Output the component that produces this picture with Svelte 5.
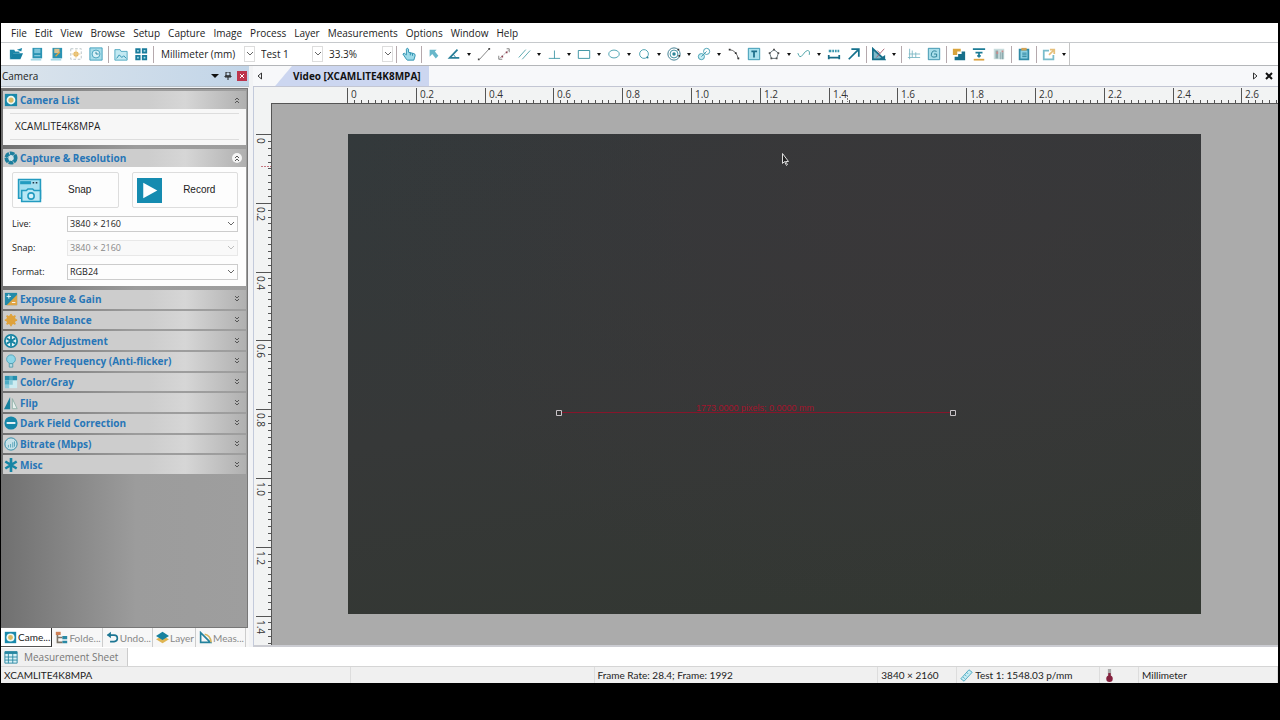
<script>
  const menus = ['File', 'Edit', 'View', 'Browse', 'Setup', 'Capture', 'Image', 'Process', 'Layer', 'Measurements', 'Options', 'Window', 'Help'];

  // 16x16 artwork
  const icons = {
    open: '<path d="M1 14V3h5l1 2h5v2H5z" fill="#1c86a8"/><path d="M4 7h12l-3 7H1z" fill="#1780a2"/><path d="M9 3l6-2-1 4" fill="#1c86a8"/>',
    save: '<path d="M4 1h11v12H4z" fill="#2a93b3"/><path d="M6 2h7v5H6z" fill="#7cc4da"/><path d="M6 10h7" stroke="#b7e2ee"/><path d="M2 14.500h12" stroke="#a8d8e6" stroke-width="2"/>',
    saveas: '<path d="M4 1h11v12H4z" fill="#2a93b3"/><path d="M6 2h6v5H6z" fill="#d9c190"/><path d="M7 10l5-5 1 1-5 5z" fill="#e0a13c"/><path d="M2 14.500h12" stroke="#a8d8e6" stroke-width="2"/>',
    burst: '<path d="M2 2h12v12H2z" fill="none" stroke="#b3bfc2" stroke-dasharray="3 2"/><circle cx="8" cy="8" r="3" fill="#e8b75b"/><path d="M8 3v10M3 8h10" stroke="#e8cf95"/>',
    timer: '<path d="M1 1h14v14H1z" fill="#a8ddea" stroke="#3b9cb9"/><circle cx="8" cy="8" r="4.500" fill="#d8f1f7" stroke="#3b9cb9"/><path d="M8 5.500V8h3" fill="none" stroke="#1c7c9b"/>',
    album: '<path d="M1 3h6l1 2h7v10H1z" fill="#c2e9f2" stroke="#47a3bd"/><path d="M3 13l3-4 3 3 2-2 3 3" fill="none" stroke="#1c86a8"/>',
    grid: '<path d="M2.500 2.500h4v4h-4zM10 2.500h4v4h-4zM2.500 10h4v4h-4zM10 10h4v4h-4z" fill="#9fd8e8" stroke="#1a7c9c" stroke-width="2"/>',
    hand: '<path d="M5 14L1 8l1.500-1L5 9V2.500Q6 0 7.500 2.500V6l6 1.500q2 .5 1.500 2.500L13.500 15H6z" fill="#9ddbea" stroke="#2189aa"/><path d="M9.500 6.500v3M12 7.500V10" stroke="#2189aa"/>',
    pointer: '<path d="M3 3h8L9 5l4 5-3 3-4-5-3 3z" fill="#68b7ca"/>',
    angle: '<path d="M12 3L3 12.500h11" fill="none" stroke="#287f99" stroke-width="2"/><path d="M7 8l3 4" stroke="#287f99"/>',
    line: '<path d="M3 14L14 2" stroke="#777"/><path d="M1 13h2v2H1zM13 1h2v2h-2z" fill="#444"/>',
    points: '<path d="M3 13L14 3" stroke="#999" stroke-dasharray="2 1"/><path d="M2 10v4h4M11 2h3v4" fill="none" stroke="#777"/><path d="M5 10h2v2H5zM10 5h2v2h-2z" fill="#8e4050"/>',
    parallel: '<path d="M2 12l8-9M6 14l9-10" stroke="#4aa0a8"/>',
    perp: '<path d="M2 13h13M8.500 13V4" stroke="#3a94a3"/>',
    rect: '<path d="M1.500 4h13v9h-13z" fill="none" stroke="#2c8a9c"/>',
    ellipse: '<ellipse cx="8" cy="8" rx="6" ry="4.500" fill="none" stroke="#3d9aaa"/>',
    circle: '<circle cx="8" cy="8" r="5" fill="none" stroke="#3d9aaa"/><path d="M11 11h2v2h-2z" fill="#277f94"/>',
    rings: '<circle cx="8" cy="8" r="7" fill="none" stroke="#2d7186"/><circle cx="8" cy="8" r="4.500" fill="none" stroke="#2d8698"/><circle cx="8" cy="8" r="2" fill="#2d8698"/><path d="M12 2h2v2h-2zM13 9h2v2h-2z" fill="#333"/>',
    twocircle: '<circle cx="5" cy="11" r="3.500" fill="#c9edf4" stroke="#3797ac"/><circle cx="11" cy="5" r="3.500" fill="none" stroke="#3797ac"/><path d="M5 11l6-6" stroke="#3797ac"/>',
    arc: '<path d="M3 3q8 1 10 11" fill="none" stroke="#555"/><path d="M2 2h2v2H2zM12 12h2v2h-2zM9 6h2v2H9z" fill="#333"/>',
    text: '<path d="M1.500 1.500h13v13h-13z" fill="#a9e2ee" stroke="#2c90ab"/><path d="M5 5h6.500M8 5v7" fill="none" stroke="#1d6f8a" stroke-width="2"/>',
    polygon: '<path d="M8 3l5 4-2 6H5L3 7z" fill="none" stroke="#52656b"/><path d="M7 2h2v2H7zM12 6h2v2h-2zM10 12h2v2h-2zM4 12h2v2H4zM2 6h2v2H2z" fill="#4b4b4b"/>',
    curve: '<path d="M1 7q2 7 5.500 2t5.500-5q3 0 2 5" fill="none" stroke="#3c9a9f"/>',
    scale: '<path d="M2 4.500h3M6 4.500h2M9 4.500h2M12 4.500h2" stroke="#3b97ae" stroke-width="3"/><path d="M1 12h14M2 9v5M14 9v5" stroke="#176b86" stroke-width="2"/>',
    arrow: '<path d="M2 14L13 3M5 2.500h8.500V11" fill="none" stroke="#15718d" stroke-width="2"/>',
    calibrate: '<path d="M1 2v12h13z" fill="#7fb9c9" stroke="#176f8a" stroke-width="2"/><path d="M5 12l9-10M6 4l3 3" stroke="#a5596b"/><path d="M8 14h7V9z" fill="#176f8a"/>',
    caliper: '<path d="M2 8h13M1 12h14M3 2v12M6 4v8M10 6v6" stroke="#79b6c4"/>',
    gbox: '<path d="M1.500 1.500h13v13h-13z" fill="#a8deea" stroke="#318da8"/><path d="M11 5q-5-2-6 3t6 3V8H8" fill="none" stroke="#247991"/>',
    stair: '<path d="M1 2h9v3H6v4H1z" fill="#d9a43c"/><path d="M11 5h4v10H3v-4h4V8h4z" fill="#176f8a"/>',
    merge: '<path d="M1 2.500h14M4 6.500h8" stroke="#1c7c96" stroke-width="2"/><path d="M8 6v6M6 10h4" fill="none" stroke="#1c7c96" stroke-width="2"/><path d="M2 14.500h12" stroke="#dba341" stroke-width="2"/>',
    compare: '<path d="M2 2h12v12H2z" fill="#c8dcdd"/><path d="M4 4h3v9H4zM9 6h1v8H9zM11 6h2v8h-2z" fill="#8ba9ac"/><path d="M5 5h2v3H5zM11 4h2v2h-2z" fill="#c98a8a"/>',
    clip: '<path d="M3 3h10v11H3z" fill="#8dd2e4" stroke="#318aa6" stroke-width="2"/><path d="M5 1h6v3H5z" fill="#d1a356"/><path d="M6 7h5M6 9h5M6 11h5" stroke="#267b95"/>',
    export: '<path d="M8 4H2v10h11V9" fill="none" stroke="#79bccb" stroke-width="2"/><path d="M8 9l5-5M9 3h5v5" fill="none" stroke="#e6c07c" stroke-width="2"/>',
    camera: '<path d="M1 1h14v14H1z" fill="#1989ab"/><circle cx="8" cy="8" r="5" fill="#edf9f5"/><circle cx="8" cy="8" r="3" fill="#d9b964"/>',
    shutter: '<circle cx="8" cy="8" r="5.500" fill="#c6dde4" stroke="#1c7e9d" stroke-width="4" stroke-dasharray="5 1"/><path d="M8 2l-3 6M14 7H8M11 13L8 8M5 13l1-6M2 7l6 4M12 4l-1 7" stroke="#1c7e9d"/><circle cx="8" cy="8" r="3" fill="#d2e3e8"/>',
    exposure: '<path d="M1 1h14v14H1z" fill="#238aa9"/><path d="M15 3v12H3z" fill="#dfa545"/><path d="M3 5h5M5.500 2.500v5M9 12h4" stroke="#fff"/>',
    sun: '<circle cx="8" cy="8" r="5.500" fill="#dfa23c"/><path d="M8 1v14M1 8h14M3 3l10 10M13 3L3 13" stroke="#dfa23c" stroke-width="2"/>',
    palette: '<circle cx="8" cy="8" r="7" fill="#e4f3f6" stroke="#1683a2" stroke-width="2"/><path d="M8 2v12M3 5l10 6M3 11l10-6" stroke="#1683a2" stroke-width="2"/>',
    bulb: '<circle cx="8" cy="6" r="5" fill="#8dd5e7" stroke="#4ba3bc"/><path d="M6 11h4v4H6z" fill="#b8dce4" stroke="#4e98aa"/>',
    shades: '<path d="M1 1h14v14H1z" fill="#cdecf1"/><path d="M1 1h14v5H1z" fill="#258ead"/><path d="M1 6h5v5H1zM6 1h4v5H6z" fill="#4eacc4"/><path d="M6 6h4v5H6zM1 11h5v4H1z" fill="#8ccbd9"/>',
    flip: '<path d="M7 1v14H0z" fill="#16809e"/><path d="M9.500 3v11.500H15z" fill="#e8f1ef" stroke="#8dafa6"/>',
    dark: '<circle cx="8" cy="8" r="7.500" fill="#1586a8"/><path d="M3 8h10" stroke="#fff" stroke-width="2"/>',
    bitrate: '<circle cx="8" cy="8" r="7" fill="#c7e2e9" stroke="#2386a3"/><path d="M5 12v-3M7.500 12V8M10 12V6M12 11V5" stroke="#4f9db3"/>',
    misc: '<path d="M8 0v16M1.500 4l13 8M14.500 4l-13 8" stroke="#1685a5" stroke-width="3"/>',
    tree: '<path d="M9 6h6v4H9zM9 12h6v3H9z" fill="#2889a5"/><path d="M3 4v10h6M3 8h6" fill="none" stroke="#7d7568" stroke-width="2"/><path d="M1 1h6v4H1z" fill="#ce7f55"/>',
    undo: '<path d="M2 5h8q4 0 4 4t-4 4H5" fill="none" stroke="#1d7693" stroke-width="2"/><path d="M6 1L1 5l5 4" fill="#1d7693"/>',
    layers: '<path d="M8 6l8 4-8 5-8-5z" fill="#dfb553"/><path d="M8 1l8 5-8 5-8-5z" fill="#17829f"/>',
    ruler: '<path d="M2 2v12h12z" fill="none" stroke="#24829d" stroke-width="2"/><path d="M7 4q7 1 8 10" fill="none" stroke="#d6b45e" stroke-width="2"/>',
    sheet: '<path d="M1 2h14v13H1z" fill="#d8f1f6" stroke="#2686a1"/><path d="M1 3h14" stroke="#2686a1" stroke-width="3"/><path d="M5 3v12M10 3v12M1 8h14M1 11.500h14" stroke="#2686a1"/>',
    tape: '<path d="M11 1l4 3-10 11-4-3z" fill="#c9edf4" stroke="#3ba0bb"/><path d="M8 4l2 2M6 7l2 2M4 10l2 2" stroke="#3ba0bb"/>',
    thermo: '<path d="M8 0v10" stroke="#aaa" stroke-width="4"/><path d="M8 5v6" stroke="#84213e" stroke-width="3"/><circle cx="8" cy="12" r="4" fill="#84213e"/>',
    snap: '<path d="M1 1h14v12H1z" fill="#a6dff0" stroke="#239bc0"/><path d="M2 3h7" stroke="#239bc0" stroke-width="2"/><path d="M10 3h1M12 3h1" stroke="#234"/><path d="M3 8h3l1-1h3l1 1h4v7H3z" fill="#b9e8f5" stroke="#239bc0"/><circle cx="9" cy="11.500" r="2" fill="#d8f3fb" stroke="#239bc0"/>',
    record: '<path d="M0 0h16v16H0z" fill="#158bb0"/><path d="M4 3l9 5-9 5z" fill="#fff"/>'
  };

  const fileTools = ['open', 'save', 'saveas', 'burst', 'timer', '|', 'album', 'grid', '|'];
  // a trailing "+" means the tool has a drop-down arrow
  const drawTools = [
    '|', 'hand', '|', 'pointer', 'angle+', 'line', 'points', 'parallel+', 'perp+', 'rect+', 'ellipse+', 'circle+',
    'rings+', 'twocircle+', 'arc', 'text', 'polygon+', 'curve+', 'scale', 'arrow', '|', 'calibrate+', '|',
    'caliper', 'gbox', '|', 'stair', 'merge', 'compare', '|', 'clip', '|', 'export+'
  ];

  const sections = [
    { icon: 'exposure', label: 'Exposure & Gain' },
    { icon: 'sun', label: 'White Balance' },
    { icon: 'palette', label: 'Color Adjustment' },
    { icon: 'bulb', label: 'Power Frequency (Anti-flicker)' },
    { icon: 'shades', label: 'Color/Gray' },
    { icon: 'flip', label: 'Flip' },
    { icon: 'dark', label: 'Dark Field Correction' },
    { icon: 'bitrate', label: 'Bitrate (Mbps)' },
    { icon: 'misc', label: 'Misc' }
  ];

  const fields = [
    { id: 'live', label: 'Live:', value: '3840 × 2160' },
    { id: 'snap', label: 'Snap:', value: '3840 × 2160', disabled: true },
    { id: 'format', label: 'Format:', value: 'RGB24' }
  ];

  const dockTabs = [
    { icon: 'camera', label: 'Came...' },
    { icon: 'tree', label: 'Folde...' },
    { icon: 'undo', label: 'Undo...' },
    { icon: 'layers', label: 'Layer' },
    { icon: 'ruler', label: 'Meas...' }
  ];

  let activeTab = $state(0);

  const STEP = 6.88;

  function makeTicks(count, start) {
    return Array.from({ length: count }, (_, i) => ({
      pos: Math.round(start + i * STEP),
      label: i % 10 === 0 ? (i === 0 ? '0' : (i / 50).toFixed(1)) : null
    }));
  }

  const xTicks = makeTicks(136, 76);
  const yTicks = makeTicks(75, 31);
</script>

{#snippet icon(name)}
  <svg class="icon" viewBox="0 0 16 16" aria-hidden="true">{@html icons[name]}</svg>
{/snippet}

{#snippet combo(id, value, disabled = false, label = null)}
  <span class="combo" class:disabled>
    <select {id} {disabled} aria-label={label}>
      <option>{value}</option>
    </select>
    <span class="combo-btn">
      <svg viewBox="0 0 8 8" aria-hidden="true"><path d="M1 2l3 3 3-3" /></svg>
    </span>
  </span>
{/snippet}

{#snippet tools(list)}
  {#each list as t}
    {#if t === '|'}
      <span class="sep"></span>
    {:else}
      <button class="tool" aria-label={t.replace('+', '')}>{@render icon(t.replace('+', ''))}</button>
      {#if t.endsWith('+')}
        <button class="drop" aria-label="More"></button>
      {/if}
    {/if}
  {/each}
{/snippet}

{#snippet chevrons(up = false)}
  <svg class="chevrons" class:up viewBox="0 0 10 10" aria-hidden="true"><path d="M3 2l2 2 2-2M3 5l2 2 2-2" /></svg>
{/snippet}

<div class="screen">
  <div class="app">
    <nav class="menubar">
      {#each menus as m}
        <button>{m}</button>
      {/each}
    </nav>

    <div class="toolbar">
      {@render tools(fileTools)}
      <div class="pick unit">{@render combo('unit', 'Millimeter (mm)', false, 'Unit')}</div>
      <div class="pick lens">{@render combo('lens', 'Test 1', false, 'Calibration')}</div>
      <div class="pick zoom">{@render combo('zoom', '33.3%', false, 'Zoom')}</div>
      {@render tools(drawTools)}
      <span class="toolbar-end"></span>
    </div>

    <div class="workspace">
      <aside class="dock">
        <header class="dock-title">
          <span>Camera</span>
          <button aria-label="Menu"><svg viewBox="0 0 8 8"><path d="M0 2h8L4 6z" fill="#111" /></svg></button>
          <button aria-label="Pin"><svg viewBox="0 0 8 8"><path d="M2 0h4v4H2zM1 4h6v1H1zM4 5v3" fill="none" stroke="#222" /></svg></button>
          <button class="close" aria-label="Close"><svg viewBox="0 0 8 8"><path d="M2 2l4 4M6 2L2 6" stroke="#fff" /></svg></button>
        </header>

        <div class="panels">
          <section>
            <button class="bar">{@render icon('camera')}<span>Camera List</span>{@render chevrons(true)}</button>
            <div class="body list"><p>XCAMLITE4K8MPA</p></div>
          </section>

          <section>
            <button class="bar hot">{@render icon('shutter')}<span>Capture &amp; Resolution</span>{@render chevrons(true)}</button>
            <div class="body capture">
              <div class="actions">
                <button>{@render icon('snap')}<span>Snap</span></button>
                <button>{@render icon('record')}<span>Record</span></button>
              </div>
              {#each fields as f}
                <div class="field">
                  <label for={f.id}>{f.label}</label>
                  {@render combo(f.id, f.value, f.disabled)}
                </div>
              {/each}
            </div>
          </section>

          <div class="collapsed">
            {#each sections as s}
              <button class="bar">{@render icon(s.icon)}<span>{s.label}</span>{@render chevrons()}</button>
            {/each}
          </div>
        </div>

        <div class="dock-tabs">
          {#each dockTabs as t, i}
            <button class:active={activeTab === i} onclick={() => (activeTab = i)}>
              {@render icon(t.icon)}<span>{t.label}</span>
            </button>
          {/each}
        </div>
      </aside>

      <main class="view">
        <div class="view-tabs">
          <button class="arrow" aria-label="Previous"><svg viewBox="0 0 8 8"><path d="M5.500 1v6L2 4z" fill="none" stroke="#333" /></svg></button>
          <button class="tab">Video [XCAMLITE4K8MPA]</button>
          <span class="spacer"></span>
          <button class="arrow" aria-label="Next"><svg viewBox="0 0 8 8"><path d="M2.500 1v6L6 4z" fill="none" stroke="#333" /></svg></button>
          <button class="arrow" aria-label="Close"><svg viewBox="0 0 8 8"><path d="M1 1l6 6M7 1L1 7" stroke="#111" stroke-width="2" /></svg></button>
        </div>

        <div class="stage">
          <div class="corner"></div>
          <svg class="ruler-x">
            {#each xTicks as t}
              <line x1={t.pos} x2={t.pos} y1={t.label ? 1 : 13} y2="16" />
              {#if t.label}
                <text x={t.pos + 4} y="11">{t.label}</text>
              {/if}
            {/each}
            <path class="mark" d="M576 8v7" />
          </svg>
          <svg class="ruler-y">
            {#each yTicks as t}
              <line y1={t.pos} y2={t.pos} x1={t.label ? 2 : 14} x2="17" />
              {#if t.label}
                <text transform="translate(3 {t.pos + 4}) rotate(90)">{t.label}</text>
              {/if}
            {/each}
            <path class="mark red" d="M7 63h10" />
          </svg>
          <div class="canvas">
            <div class="video">
              <svg viewBox="0 0 853 480">
                <rect x="214" y="278" width="389" height="1" fill="#86152b" />
                <text x="407" y="277" text-anchor="middle">1773.0000 pixels; 0.0000 mm</text>
                <path d="M208.500 276.500h5v5h-5zM602.500 276.500h5v5h-5z" fill="#333" stroke="#c9c4c8" />
                <path d="M434.500 19.500v10l2-2 2 4 1-1-2-3h3z" fill="#222" stroke="#ddd" />
              </svg>
            </div>
          </div>
        </div>
      </main>
    </div>

    <div class="sheets">
      <button>{@render icon('sheet')}<span>Measurement Sheet</span></button>
    </div>

    <footer class="status">
      <span>XCAMLITE4K8MPA</span>
      <span></span>
      <span>Frame Rate: 28.4; Frame: 1992</span>
      <span>3840 × 2160</span>
      <span>{@render icon('tape')}Test 1: 1548.03 p/mm</span>
      <span>{@render icon('thermo')}</span>
      <span>Millimeter</span>
    </footer>
  </div>
</div>

<style>
  :global(body) {
    margin: 0;
    background: #000;
  }

  .screen {
    box-sizing: border-box;
    min-height: 100vh;
    display: flex;
    padding: 23px 2px 37px 1px;
    background: #000;
    color: #222;
    font-family: 'Open Sans', 'Noto Sans', sans-serif;
    font-size: 10px;
    line-height: 16px;
  }

  .app {
    flex: 1;
    min-width: 0;
    display: flex;
    flex-direction: column;
    background: #fff;
  }

  button {
    padding: 0;
    border: 0;
    background: none;
    color: inherit;
    font: inherit;
    white-space: nowrap;
  }

  .icon {
    flex: none;
    display: block;
    width: 14px;
    height: 14px;
  }

  .menubar {
    display: flex;
    gap: 8px;
    height: 19px;
    padding-left: 10px;
    border-bottom: 1px solid #c6c9cc;
    line-height: 18px;
  }

  .toolbar {
    display: flex;
    align-items: center;
    height: 22px;
    padding-left: 5px;
    border-bottom: 1px solid #b4b6b9;
  }

  .tool {
    flex: none;
    display: grid;
    place-items: center;
    width: 20px;
    height: 20px;
  }

  .drop {
    flex: none;
    width: 10px;
    height: 20px;
    display: grid;
    place-items: center;
  }

  .drop::after {
    content: '';
    border: 2px solid transparent;
    border-top: 3px solid #111;
    border-bottom: 0;
  }

  .sep {
    flex: none;
    width: 1px;
    height: 17px;
    margin: 0 2px;
    background: #b5a9ad;
  }

  .toolbar-end {
    width: 1px;
    height: 100%;
    background: #c5c5c5;
  }

  .combo {
    display: grid;
    grid-template-columns: 1fr 12px;
    min-width: 0;
    flex: 1;
  }

  .combo select {
    grid-area: 1 / 1 / 2 / 3;
    min-width: 0;
    width: 100%;
    padding: 0 12px 0 5px;
    border: 0;
    border-radius: 0;
    appearance: none;
    background: none;
    color: inherit;
    font: inherit;
  }

  .combo-btn {
    grid-area: 1 / 2;
    display: grid;
    place-items: center;
    pointer-events: none;
  }

  .combo-btn svg {
    width: 8px;
    height: 8px;
    fill: none;
    stroke: #666;
  }

  .pick {
    flex: none;
    display: flex;
  }

  .pick .combo-btn {
    align-self: center;
    border: 1px solid #ddd;
    height: 14px;
    width: 9px;
  }

  .unit { width: 100px; }
  .lens { width: 68px; }
  .zoom { width: 70px; }

  .workspace {
    flex: 1;
    display: flex;
    gap: 4px;
    background: #f2f3f5;
  }

  .dock {
    flex: none;
    width: 248px;
    display: flex;
    flex-direction: column;
  }

  .dock-title {
    display: flex;
    align-items: center;
    gap: 5px;
    height: 20px;
    padding: 0 2px 0 1px;
    border-bottom: 1px solid #b6c0c9;
    background: linear-gradient(90deg, #dbe4ec, #c2d5e8);
  }

  .dock-title span {
    flex: 1;
  }

  .dock-title svg {
    display: block;
    width: 8px;
    height: 8px;
  }

  .dock-title .close {
    padding: 1px;
    background: #bd344c;
  }

  .panels {
    flex: 1;
    display: flex;
    flex-direction: column;
    gap: 4px;
    margin: 1px 1px 0 0;
    padding: 2px 1px 0 2px;
    border: 1px solid #777;
    border-left: 0;
    background: linear-gradient(90deg, #707070, #9c9c9c 55%, #9e9e9e);
  }

  .bar {
    display: flex;
    align-items: center;
    gap: 2px;
    width: 100%;
    height: 18px;
    padding: 0 4px 0 1px;
    background: linear-gradient(90deg, #cdcdcd 60%, #d6d6d6 75%, #b0b0b0);
    color: #2776b7;
    font-weight: bold;
    text-align: left;
  }

  .bar span {
    flex: 1;
  }

  .chevrons {
    width: 10px;
    height: 10px;
    fill: none;
    stroke: #555;
  }

  .chevrons.up {
    transform: rotate(180deg);
  }

  .hot .chevrons {
    border-radius: 50%;
    background: #f4f4f4;
  }

  .body {
    background: #f7f7f7;
  }

  .list {
    padding: 4px 7px 5px;
  }

  .list p {
    margin: 0;
    padding: 4px 5px 5px;
    border: 1px solid #ddd;
    border-width: 1px 0;
  }

  .capture {
    padding: 5px 8px 5px 9px;
    background: #fdfdfd;
    font-size: 9px;
  }

  .actions {
    display: grid;
    grid-template-columns: 1fr 1fr;
    gap: 13px;
    margin-bottom: 7px;
  }

  .actions button {
    display: flex;
    align-items: center;
    height: 36px;
    padding-left: 4px;
    border: 1px solid #ddd;
    border-radius: 2px;
    font-family: 'Liberation Sans', sans-serif;
    font-size: 10px;
  }

  .actions span {
    flex: 1;
    text-align: center;
  }

  .actions :global(.icon) {
    width: 25px;
    height: 25px;
  }

  .field {
    display: flex;
    align-items: center;
    height: 18px;
    margin-bottom: 6px;
  }

  .field:last-child {
    margin-bottom: 0;
  }

  .field label {
    width: 55px;
  }

  .field .combo {
    border: 1px solid #ccc;
  }

  .field .combo select {
    height: 14px;
    padding-left: 2px;
    line-height: 14px;
  }

  .field .combo.disabled {
    border-color: #e8e8e8;
    background: #f9f9f9;
    color: #888;
  }

  .disabled select {
    opacity: 1;
  }

  .disabled .combo-btn {
    opacity: 0.4;
  }

  .collapsed {
    display: flex;
    flex-direction: column;
    gap: 2px;
    height: 184px;
  }

  .collapsed .bar {
    flex: 1;
    min-height: 0;
  }

  .dock-tabs {
    display: flex;
    height: 19px;
    padding-right: 3px;
    background: #f7f7f7;
    color: #888;
  }

  .dock-tabs button {
    flex: 1 1 auto;
    display: flex;
    align-items: center;
    gap: 1px;
    padding-left: 3px;
    border-right: 1px solid #ccc;
    font-family: Lato, 'Open Sans', sans-serif;
  }

  .dock-tabs :global(.icon) {
    width: 13px;
    height: 13px;
  }

  .dock-tabs .active {
    border-right-color: #333;
    border-bottom: 1px solid #555;
    background: #fff;
    color: #222;
  }

  .view {
    flex: 1;
    min-width: 0;
    display: flex;
    flex-direction: column;
  }

  .view-tabs {
    display: flex;
    align-items: center;
    height: 20px;
    padding-right: 2px;
    border-bottom: 1px solid #c3c6d3;
    background: #f7f8fa;
  }

  .view-tabs svg {
    display: block;
    width: 8px;
    height: 8px;
  }

  .arrow {
    padding: 0 3px;
  }

  .tab {
    height: 20px;
    margin-left: 6px;
    padding: 0 8px 0 20px;
    background: linear-gradient(130deg, transparent 14px, #ccd6f0 15px);
    color: #111;
    font-weight: bold;
  }

  .spacer {
    flex: 1;
  }

  .stage {
    flex: 1;
    display: grid;
    grid-template-columns: 17px minmax(0, 1fr);
    grid-template-rows: 16px 1fr;
    border-left: 1px solid #c3cadb;
    border-bottom: 2px solid #cbccd2;
    background: #f2f3f3;
  }

  .ruler-x,
  .ruler-y {
    display: block;
    width: 100%;
    height: 100%;
    overflow: hidden;
    stroke: #555;
    shape-rendering: crispEdges;
  }

  .ruler-y {
    height: 0;
    min-height: 100%;
  }

  .ruler-x text,
  .ruler-y text {
    fill: #333;
    stroke: none;
  }

  .mark {
    stroke: #777;
    stroke-dasharray: 2 1;
  }

  .red {
    stroke: #c67983;
  }

  .canvas {
    padding: 30px 77px 29px 76px;
    border-top: 1px solid #555;
    border-left: 1px solid #555;
    background: #ababab;
  }

  .video {
    aspect-ratio: 16 / 9;
    background:
      radial-gradient(ellipse at 65% 15%, rgba(58, 55, 57, 0.8), transparent 70%),
      linear-gradient(170deg, #33393b, #363838 50%, #323731);
  }

  .video svg {
    display: block;
    width: 100%;
  }

  .video text {
    fill: #a3142c;
    font-family: 'Liberation Sans', sans-serif;
    font-size: 9px;
  }

  .sheets {
    display: flex;
    height: 18px;
    padding-top: 1px;
    border-bottom: 1px solid #d5d5d5;
    color: #777;
  }

  .sheets button {
    display: flex;
    align-items: center;
    gap: 6px;
    padding: 0 9px 0 3px;
    border-right: 1px solid #ccc;
    background: #f0f0f0;
  }

  .status {
    display: grid;
    grid-template-columns: 350fr 244fr 284fr 79fr 143fr 39fr 139fr;
    height: 16px;
    background: #f0f0f0;
    font-family: Lato, 'Open Sans', sans-serif;
  }

  .status span {
    display: flex;
    align-items: center;
    gap: 2px;
    padding-left: 3px;
    border-right: 1px solid #ddd;
    white-space: nowrap;
  }

  .status :global(.icon) {
    width: 13px;
    height: 13px;
  }
</style>
